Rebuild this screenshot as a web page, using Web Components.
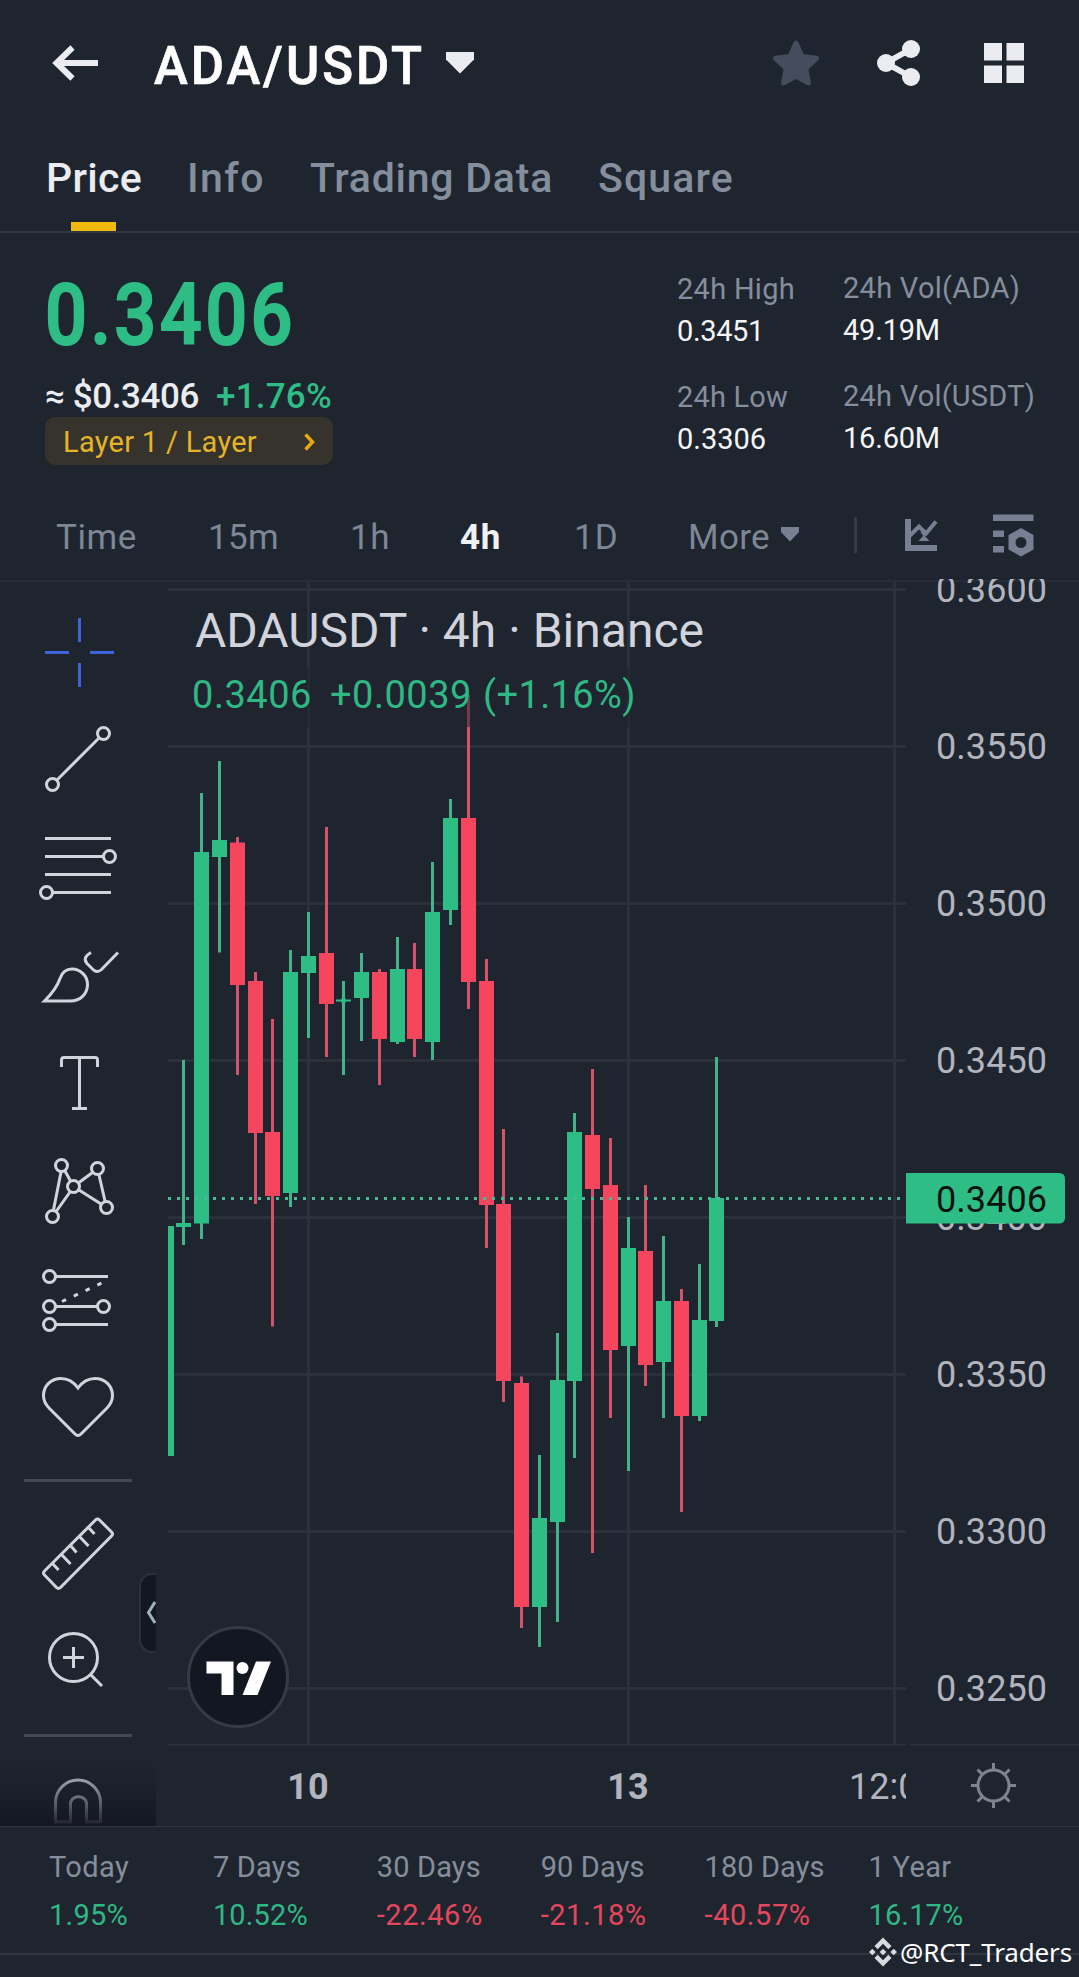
<!DOCTYPE html>
<html lang="en">
<head>
<meta charset="utf-8">
<title>ADA/USDT</title>
<style>
	body {
		margin: 0;
		background: #1f252f;
	}
</style>
</head>
<body>
<market-page></market-page>

<script>
class BaseElement extends HTMLElement {
	constructor() {
		super();
		this.attachShadow({ mode: "open" });
	}
	connectedCallback() {
		this.shadowRoot.innerHTML = this.template();
	}
}

// Text that spreads its letters over a given width, "squeeze" narrows the glyphs
class FitText extends BaseElement {
	template() {
		return `<style>
			:host { display: block; white-space: nowrap; }
			span { display: inline-block; transform-origin: left; }
		</style><span><slot></slot></span>`;
	}
	connectedCallback() {
		super.connectedCallback();
		const width = Number(this.getAttribute("width"));
		const squeeze = Number(this.getAttribute("squeeze") || 1);
		if (!width) return;
		const span = this.shadowRoot.querySelector("span");
		const natural = span.getBoundingClientRect().width;
		span.style.letterSpacing = (width / squeeze - natural) / this.textContent.length + "px";
		if (squeeze !== 1) span.style.transform = `scaleX(${squeeze})`;
		this.style.width = width + "px";
	}
}
customElements.define("fit-text", FitText);

class PairHeader extends BaseElement {
	template() {
		return `<style>
			:host {
				display: flex;
				align-items: center;
				height: 130px;
				padding-left: 50px;
				color: #fff;
			}
			svg { display: block; flex: none; fill: #eaecf1; }
			fit-text { margin-left: 54px; padding-top: 2px; font-size: 53px; font-weight: 500; -webkit-text-stroke: .7px #fff; }
			.back { fill: none; stroke: #eaecf1; stroke-width: 6; margin-top: -4px; }
			.caret { margin-left: 20px; margin-top: -4px; }
			.icons { display: flex; margin-left: 296px; margin-top: -4px; align-items: center; }
			.icons svg + svg { margin-left: 52px; }
		</style>
		<svg class="back" width="50" height="40" viewBox="50 43 50 40"><path d="M98 63H56M72.500 47.500 56.500 63l16 15.500"/></svg>
		<fit-text width="271" squeeze=".96">ADA/USDT</fit-text>
		<svg class="caret" width="30" height="22" viewBox="445 52 30 22"><path d="M446 52h28v7.500L460 73.500 446 59.500z"/></svg>
		<div class="icons">
			<svg width="50" height="50" viewBox="772 38 50 50"><path fill="#454d5c" stroke="#454d5c" stroke-width="5" stroke-linejoin="round" d="M797 43l6 13.500 14.500 1.800-10.800 10 2.800 14.700-12.500-7-12.500 7 2.800-14.700-10.800-10 14.500-1.800z"/></svg>
			<svg width="50" height="50" viewBox="873 38 50 50"><path fill="none" stroke="#eaecf1" stroke-width="6" d="M911 49 886 63l25 14"/><circle cx="911" cy="49" r="9"/><circle cx="886" cy="63" r="9"/><circle cx="911" cy="77" r="9"/></svg>
			<svg width="50" height="50" viewBox="976 38 50 50"><path d="M985 43h18v17.500h-18zM1007.500 43h17.500v17.500h-17.500zM985 65.500h18v17.500h-18zM1007.500 65.500h17.500v17.500h-17.500z"/></svg>
		</div>`;
	}
}
customElements.define("pair-header", PairHeader);

class PageTabs extends BaseElement {
	template() {
		return `<style>
			:host {
				display: flex;
				height: 101px;
				padding-left: 46px;
				border-bottom: 2px solid #303640;
				font-size: 41px;
				font-weight: 500;
				line-height: 97px;
				color: #848e9c;
			}
			fit-text { margin-right: 45px; }
			.active { position: relative; color: #eaecef; }
			.active::after {
				content: "";
				position: absolute;
				left: 25px;
				bottom: 0;
				width: 45px;
				height: 9px;
				background: #f0b90b;
			}
		</style>
		<fit-text class="active" width="96">Price</fit-text>
		<fit-text width="78">Info</fit-text>
		<fit-text width="243">Trading Data</fit-text>
		<fit-text width="136">Square</fit-text>`;
	}
}
customElements.define("page-tabs", PageTabs);

class TickerStat extends BaseElement {
	connectedCallback() {
		this.shadowRoot.innerHTML = `<style>
			:host { display: block; font-size: 29px; line-height: 42px; color: #848e9c; }
			.value { color: #f5f6f8; }
		</style>
		<fit-text width="${this.getAttribute("label-width")}">${this.getAttribute("label")}</fit-text>
		<fit-text class="value" width="${this.getAttribute("value-width")}">${this.textContent}</fit-text>`;
	}
}
customElements.define("ticker-stat", TickerStat);

class TickerSummary extends BaseElement {
	template() {
		return `<style>
			:host { display: flex; height: 253px; }
			.price { width: 632px; padding-left: 45px; }
			.last {
				margin-top: 37px;
				font-size: 85px;
				font-weight: 500;
				line-height: 90px;
				color: #2ebd85;
				-webkit-text-stroke: 2px #2ebd85;
			}
			.sub {
				display: flex;
				gap: 17px;
				margin-top: 16px;
				height: 41px;
				font-size: 35px;
				font-weight: 500;
				line-height: 41px;
				color: #eaecef;
			}
			.up { color: #2ebd85; }
			.tag {
				display: flex;
				align-items: center;
				justify-content: space-between;
				box-sizing: border-box;
				width: 288px;
				height: 48px;
				padding: 1px 17px 0 18px;
				border-radius: 10px;
				background: #35332b;
				color: #e5b429;
				font-size: 29px;
			}
			.stats {
				display: grid;
				grid-template-columns: 166px auto;
				grid-auto-rows: 108px;
				padding-top: 35px;
			}
			.vol { margin-top: -1px; }
		</style>
		<div class="price">
			<fit-text class="last" width="251" squeeze=".87">0.3406</fit-text>
			<div class="sub"><fit-text width="154">≈ $0.3406</fit-text><fit-text class="up" width="116">+1.76%</fit-text></div>
			<div class="tag"><fit-text width="194">Layer 1 / Layer</fit-text><svg width="13" height="20" fill="none" stroke="#e5a810" stroke-width="3.500"><path d="M2.500 2.500 9.500 10l-7 7.500"/></svg></div>
		</div>
		<div class="stats">
			<ticker-stat label="24h High" label-width="118" value-width="87">0.3451</ticker-stat>
			<ticker-stat class="vol" label="24h Vol(ADA)" label-width="177" value-width="97">49.19M</ticker-stat>
			<ticker-stat label="24h Low" label-width="111" value-width="89">0.3306</ticker-stat>
			<ticker-stat class="vol" label="24h Vol(USDT)" label-width="192" value-width="97">16.60M</ticker-stat>
		</div>`;
	}
}
customElements.define("ticker-summary", TickerSummary);

class IntervalBar extends BaseElement {
	template() {
		return `<style>
			:host {
				display: flex;
				align-items: center;
				height: 93px;
				padding: 0 0 1px 56px;
				border-bottom: 2px solid #272d38;
				font-size: 35px;
				color: #7d8796;
			}
			fit-text { margin-top: 10px; }
			fit-text + fit-text { margin-left: var(--gap); }
			.active { color: #f0f1f5; font-weight: 700; }
			svg { display: block; flex: none; fill: #787f92; }
			.line { width: 3px; height: 36px; margin: 4px 0 0 55px; background: #343a46; }
		</style>
		<fit-text width="81">Time</fit-text>
		<fit-text width="71" style="--gap:71px">15m</fit-text>
		<fit-text width="40" style="--gap:71px">1h</fit-text>
		<fit-text width="41" class="active" style="--gap:70px">4h</fit-text>
		<fit-text width="45" style="--gap:73px">1D</fit-text>
		<fit-text width="82" style="--gap:69px">More</fit-text>
		<svg width="18" height="15" viewBox="781 527 18 15" style="margin-left:11px;margin-top:4px"><path d="M781 527h18v5l-9 9.500-9-9.500z"/></svg>
		<div class="line"></div>
		<svg width="34" height="34" viewBox="904 517 34 34" style="margin-left:47px;margin-top:4px">
			<path d="M905 518h6v26h26v6h-32z"/>
			<path fill="none" stroke="#787f92" stroke-width="4" d="M909 535.500l10-10 7 7 10-12"/>
			<path d="M920.500 531h7l-3.500 5zM924 534l5.500 6h-11z"/>
		</svg>
		<svg width="43" height="44" viewBox="992 513 43 44" style="margin-left:54px;margin-top:5px">
			<path d="M993 514.500h40.500v6.500H993zM993 530.500h11v6.500h-11zM993 546h11v6.500h-11z"/>
			<path fill-rule="evenodd" d="M1021 528l12.500 7v14.500l-12.500 7-12.500-7V535zM1021 537a5.500 5.500 0 1 0 0 11 5.500 5.500 0 1 0 0-11z"/>
		</svg>`;
	}
}
customElements.define("interval-bar", IntervalBar);

class ToolRail extends BaseElement {
	// [top, height, drawing]
	#tools = [
		[582, 118, `<path stroke="#3b63dc" d="M79.500 618v24M79.500 663v24M45 652.500h24M90 652.500h24"/>`],
		[700, 110, `<path d="M57 780 99 738"/><circle cx="103.500" cy="733.500" r="6"/><circle cx="52.500" cy="784.500" r="6"/>`],
		[810, 110, `<path d="M45 838.500h66M45 856.500h58M45 874.500h66M53 892.500h58"/><circle cx="109.500" cy="856.500" r="6"/><circle cx="46.500" cy="892.500" r="6"/>`],
		[920, 110, `<path d="M44.500 1001H70c11 0 17.500-7.500 17.500-16.500S80 969 72 969c-6 0-10 3.500-12 9.500-3 9-8.500 15.500-15.500 22.500z"/><path d="M118 952.500 101.500 969.500q-4.500 4-8.500 0l-6-6q-5-6 4-11"/>`],
		[1030, 108, `<path d="M61.500 1067v-7q0-2.500 2.500-2.500h31q2.500 0 2.500 2.500v7M79.500 1058v50M72 1108.500h15"/>`],
		[1138, 112, `<path d="M61 1172 53.500 1210M65 1171l5.500 10M79 1182.500l13.500-10M79 1190l22 14M99 1175l6 26M56.500 1211l13.500-19"/><circle cx="61.500" cy="1165.500" r="6"/><circle cx="97.500" cy="1168.500" r="6"/><circle cx="73.500" cy="1186.500" r="6"/><circle cx="52.500" cy="1216.500" r="6"/><circle cx="106.500" cy="1207.500" r="6"/>`],
		[1250, 105, `<path d="M56 1276.500h52M56 1306.500h41M56 1324.500h52"/><path stroke-dasharray="4.500 8.500" d="M62 1301.500 105 1281.500"/><circle cx="49.500" cy="1276.500" r="6"/><circle cx="49.500" cy="1306.500" r="6"/><circle cx="103.500" cy="1306.500" r="6"/><circle cx="49.500" cy="1324.500" r="6"/>`],
		[1355, 105, `<path d="M78 1388C73 1381 67 1378.500 61 1378.500 51 1378.500 43.500 1386 43.500 1395.500q0 7 6 13L75 1434q3 3 6 0L106.500 1408.500q6-6 6-13C112.500 1386 105 1378.500 95 1378.500 89 1378.500 83 1381 78 1388z"/>`],
		[1460, 40, `<path stroke="#434854" d="M24 1480.500h108"/>`],
		[1500, 107, `<path stroke-linejoin="round" d="M95.500 1520 44.500 1571q-2 2 0 4l12 12.500q2 2 4 0L111.500 1536q2-2 0-4L99.500 1520q-2-2-4 0zM52.500 1563.500l6 6.500M61.500 1554.500l9 9.500M70.500 1545.500l6 7M79.500 1536.500l9 9.500M88.500 1527.500l6 6.500"/>`],
		[1607, 103, `<circle cx="73.500" cy="1657.500" r="24"/><path d="M63 1657.500h21M73.500 1647v21M90.500 1674.500 102 1686"/>`],
		[1710, 50, `<path stroke="#434854" d="M24 1735.500h108"/>`],
		[1760, 66, `<path d="M55.500 1822v-19.500a22.500 22.500 0 0 1 45 0V1822H86.500v-19.500a8.500 8.500 0 0 0-16 0V1822z"/>`],
	];
	template() {
		return `<style>
			:host {
				display: block;
				position: relative;
				height: 1244px;
				overflow: hidden;
			}
			svg { display: block; fill: none; stroke: #d1d4dc; stroke-width: 3; }
			.fade {
				position: absolute;
				left: 0;
				right: 0;
				bottom: 0;
				height: 66px;
				background: linear-gradient(rgba(20, 23, 34, 0), rgba(20, 23, 34, .95));
			}
			.handle {
				position: absolute;
				right: 0;
				top: 991px;
				box-sizing: border-box;
				width: 17px;
				height: 80px;
				border: 2px solid #2b313c;
				border-right: 0;
				border-radius: 13px 0 0 13px;
				background: #131722;
			}
			.handle svg { margin: 26px 0 0 5px; stroke: #9db2bd; }
		</style>
		${this.#tools.map(([y, h, d]) => `<svg width="156" height="${h}" viewBox="0 ${y} 156 ${h}">${d}</svg>`).join("")}
		<div class="fade"></div>
		<div class="handle"><svg width="10" height="24"><path d="M9 1 2.500 11.500 9 22"/></svg></div>`;
	}
}
customElements.define("tool-rail", ToolRail);

class CandleChart extends BaseElement {
	// [x, high, body top, body bottom, low, rising]
	#candles = [
		[166.5, 1226, 1226, 1456, 1456, 1],
		[183.5, 1060, 1223, 1227, 1245, 1],
		[201.5, 793, 852, 1223.5, 1239, 1],
		[219.5, 761, 840, 857, 952.5, 1],
		[237.5, 837, 842.5, 985, 1075, 0],
		[255.5, 972, 981, 1133, 1204, 0],
		[272.5, 1019, 1132, 1196, 1326.5, 0],
		[290.5, 950, 972, 1193, 1207, 1],
		[308.5, 912, 956, 973, 1038, 1],
		[326.5, 827, 953, 1004, 1057, 0],
		[343.5, 981, 999.5, 1001.5, 1075, 1],
		[361.5, 953, 972, 998, 1041, 1],
		[379.5, 969, 972, 1039, 1085, 0],
		[397.5, 937, 969, 1042, 1044, 1],
		[414.5, 943, 969, 1039, 1057, 0],
		[432.5, 862, 912, 1042, 1060, 1],
		[450.5, 799, 818, 910, 925, 1],
		[468.5, 695, 818, 982, 1009, 0],
		[486.5, 959, 981, 1205, 1248, 0],
		[503.5, 1129, 1204, 1381, 1402, 0],
		[521.5, 1376.5, 1383, 1607, 1628, 0],
		[539.5, 1455, 1518, 1607, 1647, 1],
		[557.5, 1333, 1380, 1522, 1622, 1],
		[574.5, 1113, 1132, 1381, 1458, 1],
		[592.5, 1069, 1135, 1189, 1553, 0],
		[610.5, 1138, 1185, 1350, 1418, 0],
		[628.5, 1217, 1248, 1346, 1471, 1],
		[645.5, 1185, 1251, 1365, 1386, 0],
		[663.5, 1236, 1301, 1362, 1418, 1],
		[681.5, 1289, 1301, 1416, 1512, 0],
		[699.5, 1264, 1320, 1416, 1421, 1],
		[716.5, 1057, 1198, 1321, 1327, 1],
	];
	#candle([x, high, top, bottom, low, up]) {
		return `<path fill="${up ? "#45b388" : "#d6526a"}" d="M${x - 1.5} ${high}h3V${low}h-3z"/>` +
			`<path fill="${up ? "#2ebd85" : "#f6465d"}" d="M${x - 7.5} ${top}h15V${bottom}h-15z"/>`;
	}
	template() {
		const rows = [589.5, 746.5, 903.5, 1060.5, 1217.5, 1374.5, 1531.5, 1688.5];
		const labels = ["0.3600", "0.3550", "0.3500", "0.3450", "0.3400", "0.3350", "0.3300", "0.3250"];
		return `<style>
			:host {
				display: grid;
				grid-template-columns: 738px 173px;
				grid-template-rows: 1162px 82px;
			}
			svg { display: block; }
			.plot { position: relative; }
			.legend {
				position: absolute;
				top: 0;
				left: 18px;
				color: #d1d4dc;
				font-size: 48px;
				line-height: 56px;
			}
			.legend fit-text { padding: 21px 0 9px 9px; }
			.change {
				display: flex;
				height: 55px;
				padding: 4px 12px 0 6px;
				background: rgba(31, 37, 47, .55);
				color: #2fb884;
				font-size: 38px;
				line-height: 46px;
			}
			.change fit-text { padding: 0; }
			.logo { position: absolute; left: 19px; bottom: 15px; }
			.price { margin-top: -3px; }
			text { font-size: 36px; fill: #b2b5be; }
		</style>
		<div class="plot">
			<svg width="738" height="1162" viewBox="168 582 738 1162">
				<path stroke="#2b313b" stroke-width="3" d="M308.500 582V1744M628.500 582V1744M894.500 582V1744${rows.map((y) => `M168 ${y}H906`).join("")}"/>
				${this.#candles.map((c) => this.#candle(c)).join("")}
				<path fill="#2ebd85" d="M341.500 998h4v5h-4z"/>
				<path stroke="#4cb894" stroke-width="3" stroke-dasharray="3 6" d="M168 1198.500H902"/>
			</svg>
			<div class="legend">
				<fit-text width="509">ADAUSDT · 4h · Binance</fit-text>
				<div class="change">
					<fit-text width="120">0.3406</fit-text>
					<fit-text width="142" style="margin-left:18px">+0.0039</fit-text>
					<fit-text width="153" style="margin-left:11px">(+1.16%)</fit-text>
				</div>
			</div>
			<svg class="logo" width="102" height="104" viewBox="187.500 1625 102 104">
				<circle cx="238.500" cy="1677" r="49.500" fill="#131722" stroke="#363a45" stroke-width="3"/>
				<path fill="#fff" d="M207 1661.500h27V1695h-12v-21.500h-15zM256.500 1661.500h15L258 1695h-15z"/>
				<circle cx="243" cy="1668" r="6" fill="#fff"/>
			</svg>
		</div>
		<svg class="price" width="173" height="1165" viewBox="906 579 173 1165">
			${rows.map((y, i) => `<text x="936" y="${y + 12.5}" textLength="111">${labels[i]}</text>`).join("")}
			<path fill="#2ebd85" d="M906 1173h153q6 0 6 6v38.500q0 6-6 6H906z"/>
			<text x="936" y="1211.500" textLength="111" style="fill:#0a120f">0.3406</text>
		</svg>
		<svg width="738" height="82" viewBox="168 1744 738 82">
			<path fill="#2b313b" d="M168 1743.500h738v2H168z"/>
			<text x="308" y="1799" text-anchor="middle" font-weight="700">10</text>
			<text x="628" y="1799" text-anchor="middle" font-weight="700">13</text>
			<text x="849" y="1798.500">12:00</text>
		</svg>
		<svg width="173" height="82" viewBox="906 1744 173 82" fill="none" stroke="#7f838f" stroke-width="3">
			<path stroke="#2b313b" stroke-width="2" d="M910 1744.500h169"/>
			<circle cx="993.500" cy="1785.500" r="15.500"/>
			<path d="M993.500 1763v7M993.500 1801v7M971 1785.500h7M1009 1785.500h7M977.500 1769.500l5 5M1004.500 1796.500l5 5M977.500 1801.500l5-5M1004.500 1774.500l5-5"/>
		</svg>`;
	}
}
customElements.define("candle-chart", CandleChart);

class PeriodReturn extends BaseElement {
	connectedCallback() {
		const value = this.textContent;
		this.shadowRoot.innerHTML = `<style>
			:host { display: block; font-size: 29px; line-height: 48px; color: #848e9c; }
			.up { color: #2fb884; }
			.down { color: #e4475d; }
		</style>
		<fit-text width="${this.getAttribute("label-width")}">${this.getAttribute("label")}</fit-text>
		<fit-text class="${value.startsWith("-") ? "down" : "up"}" width="${this.getAttribute("value-width")}">${value}</fit-text>`;
	}
}
customElements.define("period-return", PeriodReturn);

class PeriodReturns extends BaseElement {
	template() {
		return `<style>
			:host {
				display: grid;
				grid-template-columns: repeat(6, 163.9px);
				box-sizing: border-box;
				height: 129px;
				padding: 16px 0 0 49px;
				border-top: 1px solid #303640;
				border-bottom: 2px solid #303640;
			}
		</style>
		<period-return label="Today" label-width="80" value-width="79">1.95%</period-return>
		<period-return label="7 Days" label-width="88" value-width="95">10.52%</period-return>
		<period-return label="30 Days" label-width="104" value-width="106">-22.46%</period-return>
		<period-return label="90 Days" label-width="104" value-width="106">-21.18%</period-return>
		<period-return label="180 Days" label-width="120" value-width="106">-40.57%</period-return>
		<period-return label="1 Year" label-width="83" value-width="95">16.17%</period-return>`;
	}
}
customElements.define("period-returns", PeriodReturns);

class AuthorMark extends BaseElement {
	template() {
		return `<style>
			:host {
				display: flex;
				align-items: center;
				gap: 3px;
				font: 26px "Noto Sans", sans-serif;
				color: #fff;
			}
			svg { fill: #d9dadd; }
		</style>
		<svg width="28" height="30" viewBox="-14 -15 28 30">
			<path d="M0-14.500 8.500-6 5.300-2.800 0-8.200-5.300-2.800-8.500-6zM0 14.500 8.500 6 5.300 2.800 0 8.200-5.300 2.800-8.500 6zM0-3.300 3.300 0 0 3.300-3.300 0zM-10.700-3.300-7.400 0l-3.300 3.300L-14 0zM10.700-3.300 14 0l-3.300 3.300L7.400 0z"/>
		</svg>
		<fit-text width="172">@RCT_Traders</fit-text>`;
	}
}
customElements.define("author-mark", AuthorMark);

class MarketPage extends BaseElement {
	template() {
		return `<style>
			:host {
				display: block;
				position: relative;
				width: 1079px;
				height: 1977px;
				overflow: hidden;
				background: #1f252f;
				font-family: Roboto, "Liberation Sans", sans-serif;
			}
			.chart { display: grid; grid-template-columns: 156px 911px; column-gap: 12px; }
			author-mark { position: absolute; right: 7px; top: 1934px; }
		</style>
		<pair-header></pair-header>
		<page-tabs></page-tabs>
		<ticker-summary></ticker-summary>
		<interval-bar></interval-bar>
		<div class="chart">
			<tool-rail></tool-rail>
			<candle-chart></candle-chart>
		</div>
		<period-returns></period-returns>
		<author-mark></author-mark>`;
	}
}
customElements.define("market-page", MarketPage);
</script>
</body>
</html>
